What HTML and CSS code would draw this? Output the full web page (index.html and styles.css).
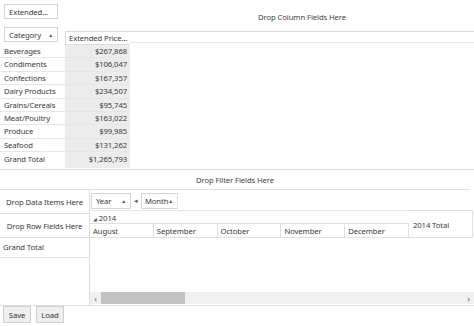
FILE: index.html
```html
<!DOCTYPE html>
<html lang="en">
<head>
  <meta charset="UTF-8" />
  <title>Pivot Grid</title>
  <link rel="stylesheet" href="styles.css">
</head>
<body>
  <section class="pivot-top">
    <div class="left-pane">
      <div class="filter-row">
        <div class="field-btn wide">Extended...</div>
      </div>
      <div class="header-row">
        <div class="field-btn wide">Category <span class="sort">&#9650;</span></div>
        <div class="data-head">Extended Price...</div>
      </div>
      <div class="row"><span class="label">Beverages</span><span class="value">$267,868</span></div>
      <div class="row"><span class="label">Condiments</span><span class="value">$106,047</span></div>
      <div class="row"><span class="label">Confections</span><span class="value">$167,357</span></div>
      <div class="row"><span class="label">Dairy Products</span><span class="value">$234,507</span></div>
      <div class="row"><span class="label">Grains/Cereals</span><span class="value">$95,745</span></div>
      <div class="row"><span class="label">Meat/Poultry</span><span class="value">$163,022</span></div>
      <div class="row"><span class="label">Produce</span><span class="value">$99,985</span></div>
      <div class="row"><span class="label">Seafood</span><span class="value">$131,262</span></div>
      <div class="row total"><span class="label">Grand Total</span><span class="value">$1,265,793</span></div>
    </div>
    <div class="right-pane">
      <div class="drop-columns">Drop Column Fields Here</div>
      <div class="col-strip"></div>
    </div>
  </section>

  <section class="pivot-bottom">
    <div class="drop-filter">Drop Filter Fields Here</div>
    <div class="bottom-body">
      <div class="side">
        <div class="side-cell">Drop Data Items Here</div>
        <div class="side-cell">Drop Row Fields Here</div>
        <div class="side-cell total">Grand Total</div>
      </div>
      <div class="grid-area">
        <div class="col-fields">
          <div class="field-btn year">Year <span class="sort">&#9650;</span></div>
          <span class="sep">&#9666;</span>
          <div class="field-btn month">Month <span class="sort">&#9650;</span></div>
        </div>
        <div class="col-head">
          <div class="months">
            <div class="year-cell"><span class="expand">&#9698;</span> 2014</div>
            <div class="month-row">
              <div class="month">August</div>
              <div class="month">September</div>
              <div class="month">October</div>
              <div class="month">November</div>
              <div class="month">December</div>
            </div>
          </div>
          <div class="year-total">2014 Total</div>
        </div>
        <div class="grid-empty"></div>
        <div class="hscroll">
          <span class="arrow">&lsaquo;</span>
          <div class="track"><div class="thumb"></div></div>
          <span class="arrow">&rsaquo;</span>
        </div>
      </div>
    </div>
  </section>

  <footer class="actions">
    <button class="action">Save</button>
    <button class="action">Load</button>
  </footer>
</body>
</html>
```

FILE: styles.css
```css
body {
  margin: 0;
  font-family: 'Noto Sans', 'Open Sans', sans-serif;
  font-size: 7.7px;
  letter-spacing: -0.1px;
  color: #3a3a3a;
  background: #fff;
  width: 474px;
  height: 326px;
  overflow: hidden;
}

.pivot-top {
  display: flex;
  height: 169px;
  border-bottom: 1px solid #dcdcdc;
}

.left-pane {
  width: 130px;
  flex-shrink: 0;
}

.filter-row {
  height: 27px;
  padding: 4px 0 0 4px;
  box-sizing: border-box;
}

.field-btn {
  display: flex;
  align-items: center;
  height: 15px;
  box-sizing: border-box;
  border: 1px solid #d4d4d4;
  background: #fff;
  padding: 0 4px;
  white-space: nowrap;
}

.field-btn.wide {
  width: 54px;
}

.sort {
  margin-left: auto;
  font-size: 5px;
  color: #555;
}

.header-row {
  display: flex;
  align-items: flex-end;
  height: 18px;
  padding-left: 4px;
}

.header-row .field-btn {
  align-self: flex-start;
}

.data-head {
  margin-left: 7px;
  width: 65px;
  height: 14px;
  box-sizing: border-box;
  border: 1px solid #dcdcdc;
  border-right: none;
  padding: 0 3px;
  line-height: 13px;
  white-space: nowrap;
  overflow: hidden;
}

.row {
  display: flex;
  height: 13.4px;
  line-height: 13px;
  border-bottom: 1px solid #e6e6e6;
  box-sizing: border-box;
}

.row.total {
  height: 16px;
  line-height: 15px;
  border-bottom: none;
}

.label {
  width: 65px;
  padding-left: 4px;
  box-sizing: border-box;
  white-space: nowrap;
}

.value {
  width: 65px;
  padding-right: 3px;
  box-sizing: border-box;
  text-align: right;
  background: #ececec;
}

.right-pane {
  flex: 1;
}

.drop-columns {
  height: 31px;
  line-height: 34px;
  text-align: center;
  color: #444;
}

.col-strip {
  height: 12px;
  box-sizing: border-box;
  border-top: 1px solid #dcdcdc;
  border-bottom: 1px solid #e6e6e6;
}

.pivot-bottom {
  height: 135px;
  display: flex;
  flex-direction: column;
  border-bottom: 1px solid #e0e0e0;
}

.drop-filter {
  height: 19px;
  line-height: 21px;
  text-align: center;
  margin-right: 4px;
  border-bottom: 1px solid #e0e0e0;
  color: #444;
}

.bottom-body {
  flex: 1;
  display: flex;
}

.side {
  width: 89px;
  flex-shrink: 0;
  border-right: 1px solid #dcdcdc;
}

.side-cell {
  height: 23px;
  line-height: 24px;
  text-align: center;
  border-bottom: 1px solid #e0e0e0;
  white-space: nowrap;
}

.side-cell.total {
  height: 19px;
  line-height: 19px;
  text-align: left;
  padding-left: 3px;
}

.grid-area {
  flex: 1;
  display: flex;
  flex-direction: column;
}

.col-fields {
  display: flex;
  align-items: center;
  height: 21px;
  padding-left: 1px;
}

.field-btn.year {
  width: 40px;
  height: 16px;
}

.field-btn.month {
  width: 37px;
  height: 16px;
}

.sep {
  font-size: 7px;
  margin: 0 3px;
  color: #555;
}

.col-head {
  display: flex;
  height: 28px;
  margin-top: -1px;
}

.months {
  width: 319px;
  display: flex;
  flex-direction: column;
}

.year-cell {
  height: 14px;
  line-height: 14px;
  padding-left: 3px;
  border-top: 1px solid #e6e6e6;
  border-bottom: 1px solid #e0e0e0;
  box-sizing: border-box;
}

.expand {
  font-size: 5px;
  color: #555;
}

.month-row {
  display: flex;
  height: 14px;
  border-bottom: 1px solid #e0e0e0;
  box-sizing: border-box;
}

.month {
  width: 63.8px;
  line-height: 14px;
  padding-left: 3px;
  box-sizing: border-box;
  border-right: 1px solid #e0e0e0;
}

.year-total {
  width: 64px;
  padding-left: 4px;
  line-height: 28px;
  box-sizing: border-box;
  border: 1px solid #e0e0e0;
  border-left: none;
}

.grid-empty {
  flex: 1;
}

.hscroll {
  display: flex;
  align-items: center;
  height: 12px;
  margin-bottom: 1px;
  background: #f0f0f0;
}

.arrow {
  width: 11px;
  text-align: center;
  font-size: 9px;
  line-height: 11px;
  color: #666;
}

.track {
  flex: 1;
  height: 12px;
}

.thumb {
  width: 84px;
  height: 12px;
  background: #c2c2c2;
}

.actions {
  display: flex;
  gap: 5px;
  padding: 0 0 0 3px;
}

.action {
  font-family: inherit;
  font-size: 7.7px;
  letter-spacing: -0.1px;
  color: #333;
  height: 17px;
  width: 28px;
  padding: 0;
  background: #efefef;
  border: 1px solid #cfcfcf;
  border-radius: 0;
}
```
